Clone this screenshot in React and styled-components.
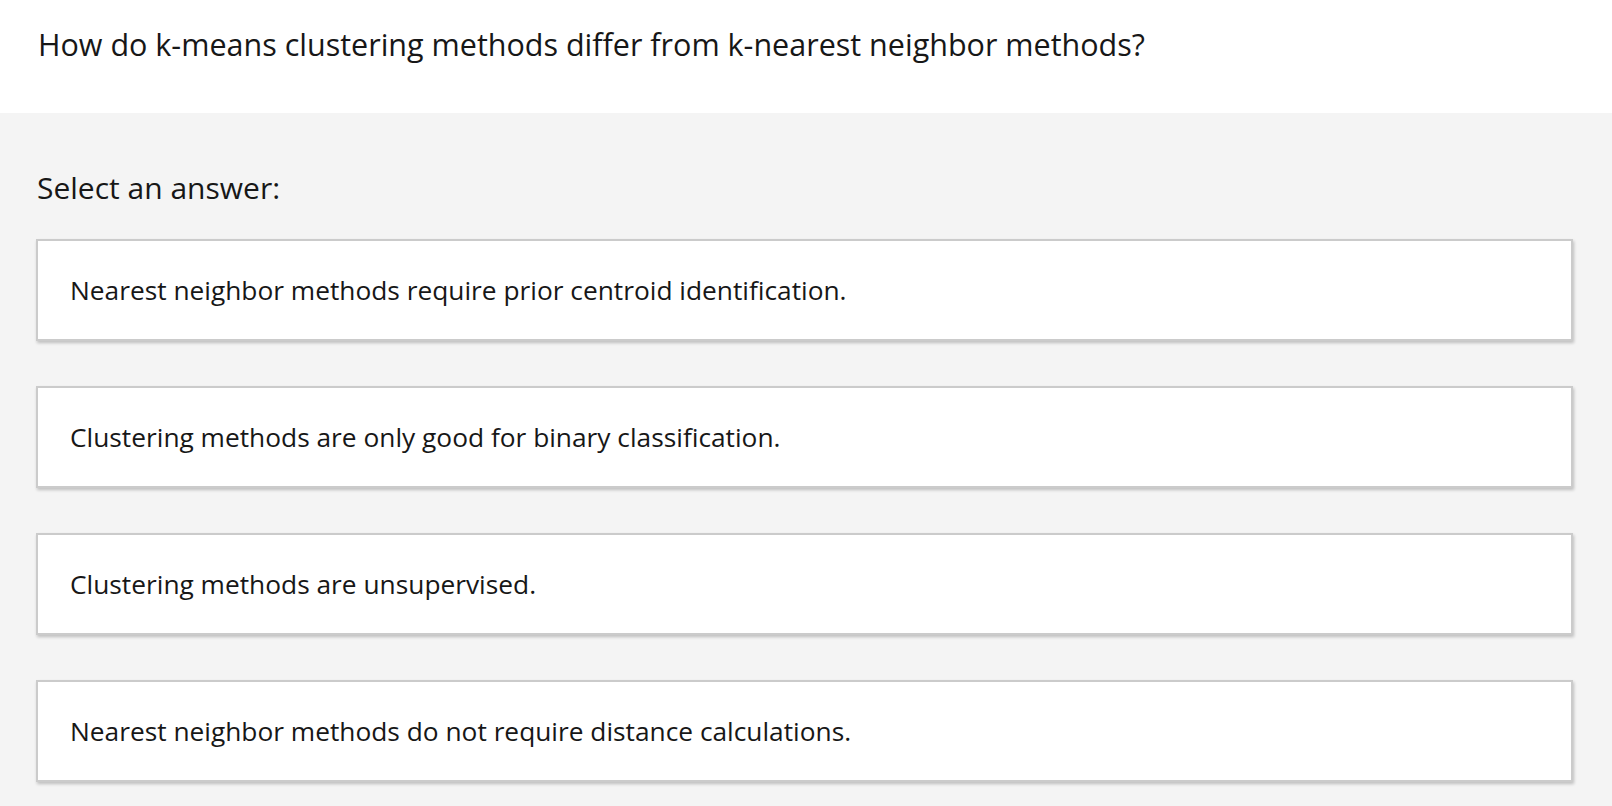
import React from 'react'
import styled, { createGlobalStyle } from 'styled-components'

const GlobalStyle = createGlobalStyle`
  html, body {
    margin: 0;
    padding: 0;
    background: #f4f4f4;
    font-family: "Segoe UI", "Open Sans", "Noto Sans", sans-serif;
    color: #171717;
  }
`

const Header = styled.div`
  background: #ffffff;
  height: 113px;
  padding: 20px 38px 0;
  box-sizing: border-box;

  h1 {
    margin: 0;
    font-size: 30.5px;
    font-weight: 400;
    line-height: 48px;
  }
`

const Body = styled.div`
  padding: 55px 39px 30px 36px;
`

const Prompt = styled.h2`
  margin: 0 0 31px 1px;
  font-size: 30px;
  font-weight: 400;
  line-height: 40px;
`

const Options = styled.div`
  display: flex;
  flex-direction: column;
  gap: 45px;
`

const Option = styled.div`
  background: #ffffff;
  border: 2px solid #cbcbcb;
  box-shadow: 1px 2px 3px rgba(0, 0, 0, 0.22);
  height: 102px;
  box-sizing: border-box;
  display: flex;
  align-items: center;
  padding: 0 32px;
  font-size: 26.3px;
  cursor: pointer;
`

const answers = [
  'Nearest neighbor methods require prior centroid identification.',
  'Clustering methods are only good for binary classification.',
  'Clustering methods are unsupervised.',
  'Nearest neighbor methods do not require distance calculations.',
]

export default function App() {
  return (
    <>
      <GlobalStyle />
      <Header>
        <h1>How do k-means clustering methods differ from k-nearest neighbor methods?</h1>
      </Header>
      <Body>
        <Prompt>Select an answer:</Prompt>
        <Options>
          {answers.map((a) => (
            <Option key={a}>{a}</Option>
          ))}
        </Options>
      </Body>
    </>
  )
}
